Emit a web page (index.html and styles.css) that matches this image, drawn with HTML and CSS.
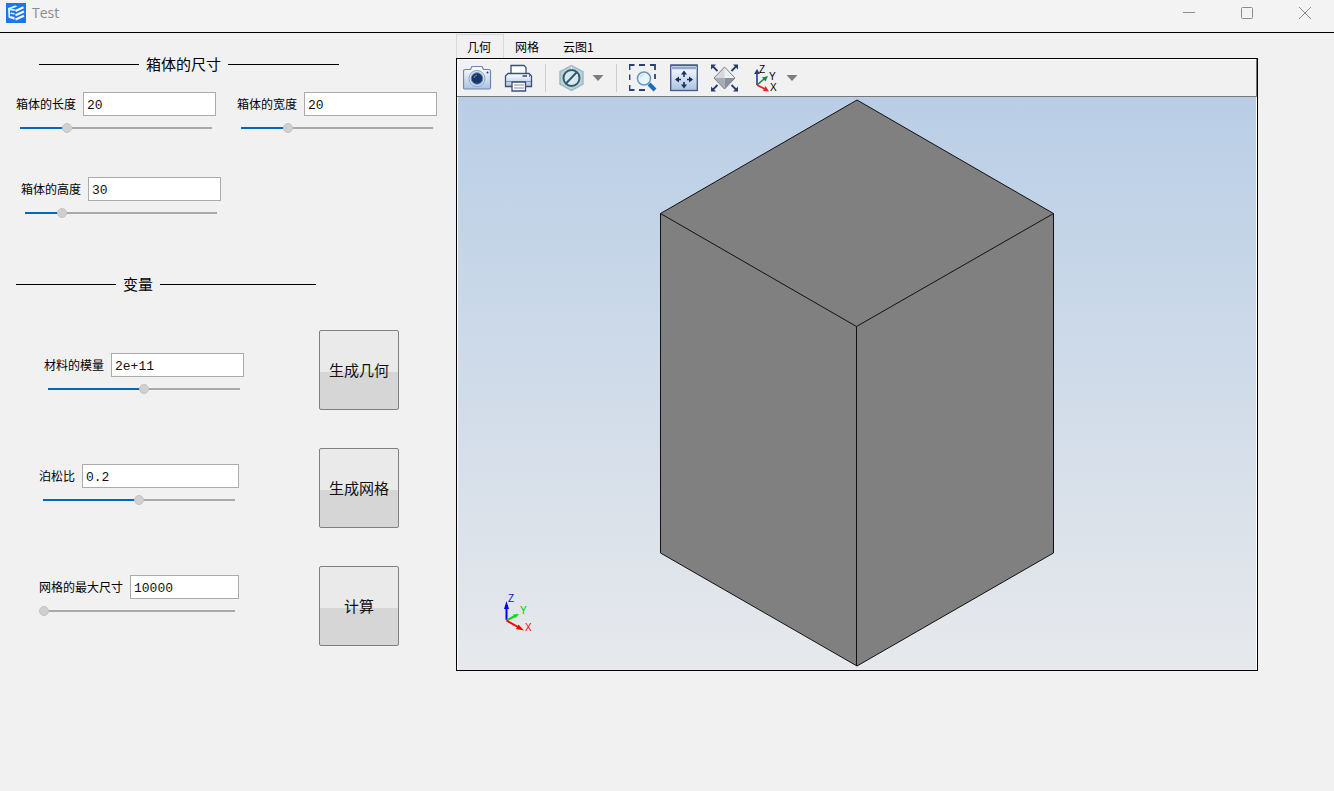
FILE: index.html
```
<!DOCTYPE html>
<html lang="zh-CN">

<head>
    <meta charset="UTF-8">
    <meta name="viewport" content="width=device-width, initial-scale=1.0">
    <title>Test</title>
    <link rel="stylesheet" href="styles.css">
</head>

<body>
    <header class="titlebar">
        <svg class="app-icon" viewBox="0 0 20 20" aria-hidden="true">
            <rect width="20" height="20" fill="#1877ea"/>
            <path d="M2 5 9 2.500 11.500 3.500 5.500 5.800 9.500 6.500 8.500 8 4 7.300V13L8.500 14V16.800L2.500 14.800Z" fill="#e4effd"/>
            <path d="M4.500 10.200 8.500 10.800" stroke="#e4effd" stroke-width="1.500"/>
            <path d="M9.500 8 17.500 4.300M9.500 12.200 18 8.500M9.500 16.400 18 12.700" stroke="#f4f8ff" stroke-width="2.200"/>
        </svg>
        <span class="title">Test</span>
        <div class="window-buttons">
            <button type="button" aria-label="最小化">
                <svg width="12" height="12" viewBox="0 0 12 12"><path d="M0 5.500H12"/></svg>
            </button>
            <button type="button" aria-label="最大化">
                <svg width="12" height="12" viewBox="0 0 12 12"><rect x="0.500" y="0.500" width="11" height="11" rx="1"/></svg>
            </button>
            <button type="button" aria-label="关闭">
                <svg width="12" height="12" viewBox="0 0 12 12"><path d="M0 0 12 12M12 0 0 12"/></svg>
            </button>
        </div>
    </header>

    <main class="workspace">
        <form class="params">
            <h2 class="section-title section-size">箱体的尺寸</h2>
            <div class="size-fields">
                <div class="field">
                    <label for="length">箱体的长度</label>
                    <input type="text" id="length" value="20">
                    <input type="range" aria-label="箱体的长度" value="24" style="--fill: 24%">
                </div>
                <div class="field">
                    <label for="width">箱体的宽度</label>
                    <input type="text" id="width" value="20">
                    <input type="range" aria-label="箱体的宽度" value="24" style="--fill: 24%">
                </div>
                <div class="field indent">
                    <label for="height">箱体的高度</label>
                    <input type="text" id="height" value="30">
                    <input type="range" aria-label="箱体的高度" value="19" style="--fill: 19%">
                </div>
            </div>

            <h2 class="section-title">变量</h2>
            <div class="variables">
                <div class="variable-fields">
                    <div class="field indent">
                        <label for="modulus">材料的模量</label>
                        <input type="text" id="modulus" value="2e+11">
                        <input type="range" aria-label="材料的模量" value="50" style="--fill: 50%">
                    </div>
                    <div class="field">
                        <label for="poisson">泊松比</label>
                        <input type="text" id="poisson" value="0.2">
                        <input type="range" aria-label="泊松比" value="50" style="--fill: 50%">
                    </div>
                    <div class="field">
                        <label for="mesh">网格的最大尺寸</label>
                        <input type="text" id="mesh" value="10000">
                        <input type="range" aria-label="网格的最大尺寸" value="0" style="--fill: 0%">
                    </div>
                </div>
                <div class="actions">
                    <button type="button">生成几何</button>
                    <button type="button">生成网格</button>
                    <button type="button">计算</button>
                </div>
            </div>
        </form>

        <section class="viewer">
            <div class="tabs" role="tablist">
                <button type="button" class="tab active" role="tab" aria-selected="true">几何</button>
                <button type="button" class="tab" role="tab" aria-selected="false">网格</button>
                <button type="button" class="tab" role="tab" aria-selected="false">云图1</button>
            </div>
            <div class="panel">
                <div class="toolbar">
                    <button type="button" aria-label="截图">
                        <svg viewBox="0 0 29 28">
                            <defs>
                                <linearGradient id="body" x2="0" y2="1"><stop stop-color="#fff"/><stop offset="1" stop-color="#abc3e2"/></linearGradient>
                            </defs>
                            <path d="M2.500 5.500H7.500L9 2.500H19L20.500 5.500H26Q27.500 5.500 27.500 7V23.500Q27.500 25 26 25H2Q.5 25 .5 23.500V7.500Q.5 5.500 2.500 5.500Z" fill="url(#body)" stroke="#6c86b0" stroke-width="1.200"/>
                            <circle cx="14" cy="14.500" r="8" fill="#d9e4f2" stroke="#8ba2c4"/>
                            <circle cx="14" cy="14.500" r="5.800" fill="#17376b" stroke="#6b86ad"/>
                            <path d="M11 14Q11.500 11.500 14 11" fill="none" stroke="#6f8bb5" stroke-width="1.200"/>
                            <circle cx="24.500" cy="8.500" r="1" fill="#223c70"/>
                        </svg>
                    </button>
                    <button type="button" aria-label="打印">
                        <svg viewBox="0 0 29 28">
                            <path d="M7 10V1.500H20L22 3.500V10" fill="#fff" stroke="#3b4f7c" stroke-width="1.300"/>
                            <path d="M4 9.500H25L27.500 12V22.500H1.500V12Z" fill="url(#body)" stroke="#3b4f7c" stroke-width="1.300"/>
                            <path d="M2 17.500H27" stroke="#8291ae"/>
                            <path d="M18.500 12H23M25 12H26" stroke="#34466f" stroke-width="1.500"/>
                            <path d="M8 18H21.500V27H8Z" fill="#fff" stroke="#3b4f7c" stroke-width="1.300"/>
                            <path d="M10 21H20M10 24H20" stroke="#7e8da8" stroke-width="1.200"/>
                        </svg>
                    </button>
                    <span class="separator"></span>
                    <div class="tool-group">
                        <button type="button" aria-label="选择过滤">
                            <svg viewBox="0 0 29 28">
                                <path d="M13.500 1.500 25 7.700V20L13.500 26.500 2 20V7.700Z" fill="#bcd0d6" stroke="#a0b5bd" stroke-width="1.400"/>
                                <path d="M13.500 2.500V6" stroke="#eef5f6"/>
                                <circle cx="13.500" cy="14" r="8" fill="#dce6e8" stroke="#285f75" stroke-width="2"/>
                                <path d="M8 19.500 18.500 8.500" stroke="#285f75" stroke-width="2"/>
                                <path d="M10.500 20 19.500 10.200" stroke="#f4f8f8"/>
                            </svg>
                        </button>
                        <button type="button" class="dropdown" aria-label="更多过滤选项">
                            <svg viewBox="0 0 12 28"><path d="M0.500 11H11.500L6 17Z" fill="#7d7d7d"/></svg>
                        </button>
                    </div>
                    <span class="separator"></span>
                    <button type="button" aria-label="框选缩放">
                        <svg viewBox="0 0 29 28">
                            <path d="M.5 6V1H5.500M10 1H16M21 1H26V6M.5 10.500V16M.5 21V26H5.500M10 26H16M26 10V15" fill="none" stroke="#294275" stroke-width="1.800"/>
                            <path d="M20 20 26 26" stroke="#1d6db0" stroke-width="4"/>
                            <circle cx="15" cy="14.500" r="6.500" fill="#eaf4fa" stroke="#6697bd" stroke-width="1.500"/>
                            <path d="M11 13.500Q12 10.500 15 10.500" fill="none" stroke="#b8d5e7"/>
                        </svg>
                    </button>
                    <button type="button" aria-label="适合窗口">
                        <svg viewBox="0 0 29 28">
                            <rect x=".7" y="1" width="26.600" height="25.500" fill="url(#body)" stroke="#4a5f8b" stroke-width="1.400"/>
                            <path d="M1 1.500H27" stroke="#4a5f8b" stroke-width="1.500"/>
                            <path d="M2 4H26" stroke="#8faad0" stroke-width="2.500"/>
                            <path d="M14 8V13M14 18V23M6 15.500H11M17 15.500H22" stroke="#1b315f" stroke-width="1.600"/>
                            <path d="M11 10.500 14 6.500 17 10.500ZM11 20.500 14 24.500 17 20.500ZM9 12.500 5 15.500 9 18.500ZM19 12.500 23 15.500 19 18.500Z" fill="#1b315f"/>
                        </svg>
                    </button>
                    <button type="button" aria-label="全部显示">
                        <svg viewBox="0 0 29 28">
                            <path d="M13.500 3 24 14H3Z" fill="#eef0f2"/>
                            <path d="M13.500 3V14H3Z" fill="#d5d9df"/>
                            <path d="M3 14H13.500V25Z" fill="#a5adb8"/>
                            <path d="M13.500 14H24L13.500 25Z" fill="#88919e"/>
                            <path d="M13.500 3 24 14 13.500 25 3 14Z" fill="none" stroke="#76808f"/>
                            <path d="M1.500 2 6.500 7M25.500 2 20.500 7M1.500 26 6.500 21M25.500 26 20.500 21" stroke="#263d70" stroke-width="1.800"/>
                            <path d="M0 .5H5L0 5.500ZM27 .5V5.500L22 .5ZM0 27.500V22.500L5 27.500ZM27 27.500H22L27 22.500Z" fill="#263d70"/>
                        </svg>
                    </button>
                    <div class="tool-group">
                        <button type="button" aria-label="视图方向">
                            <svg viewBox="0 0 29 28">
                                <path d="M5 21V8" stroke="#243f91" stroke-width="1.600"/>
                                <path d="M2 10 5 5 8 10Z" fill="#243f91"/>
                                <path d="M5 21 12 15" stroke="#178746" stroke-width="1.600"/>
                                <path d="M16 12 13.500 17.500 10 13.500Z" fill="#178746"/>
                                <path d="M5 21 13 25" stroke="#ed2028" stroke-width="1.600"/>
                                <path d="M17 27.500 11 27 13.500 22Z" fill="#ed2028"/>
                                <text x="7" y="9">Z</text>
                                <text x="17" y="16">Y</text>
                                <text x="18" y="27">X</text>
                            </svg>
                        </button>
                        <button type="button" class="dropdown" aria-label="更多视图方向">
                            <svg viewBox="0 0 12 28"><path d="M0.500 11H11.500L6 17Z" fill="#7d7d7d"/></svg>
                        </button>
                    </div>
                </div>
                <svg class="scene" viewBox="0 0 798 573" role="img" aria-label="箱体">
                    <defs>
                        <linearGradient id="sky" x2="0" y2="1"><stop stop-color="#b9cee6"/><stop offset="1" stop-color="#e7e9ec"/></linearGradient>
                    </defs>
                    <rect width="798" height="573" fill="url(#sky)"/>
                    <g class="box">
                        <path d="M399 3 595.500 116.500V456L399 569 202.500 456V116.500Z"/>
                        <path d="M202.500 116.500 398.500 229.500 595.500 116.500M398.500 229.500V569"/>
                    </g>
                    <g class="triad">
                        <path d="M48.500 523V508" stroke="#0000f5"/>
                        <path d="M46 512 48.500 504 51 512Z" fill="#0000f5"/>
                        <path d="M48.500 523.500 57 519" stroke="#00df00"/>
                        <path d="M61 517 57.500 521 55 517.500Z" fill="#00df00"/>
                        <path d="M48.500 523.500 60 530" stroke="#f00"/>
                        <path d="M66 533.500 58 532 60.500 527.500Z" fill="#f00"/>
                        <text x="50" y="505" fill="#1212c8">Z</text>
                        <text x="62" y="517" fill="#00c800">Y</text>
                        <text x="67" y="534" fill="#f00">X</text>
                    </g>
                </svg>
            </div>
        </section>
    </main>
</body>

</html>
```
FILE: styles.css
```
* {
    box-sizing: border-box;
}

body {
    margin: 0;
    background: #f1f1f1;
    color: #000;
    font-family: "Noto Sans CJK SC", sans-serif;
    font-size: 12px;
}

button {
    margin: 0;
    padding: 0;
    border: 0;
    background: none;
    color: inherit;
    font-family: inherit;
}

/* title bar */
.titlebar {
    display: flex;
    align-items: center;
    height: 33px;
    padding: 0 0 6px 6px;
    border-bottom: 1px solid #000;
    background: #f3f3f3;
}

.app-icon {
    width: 20px;
    height: 20px;
}

.title {
    margin-left: 6px;
    color: #8c8c8c;
    font-family: "Open Sans", sans-serif;
    font-size: 14px;
    line-height: 20px;
}

.window-buttons {
    display: flex;
    margin-left: auto;
}

.window-buttons button {
    display: flex;
    align-items: center;
    justify-content: center;
    width: 58px;
    height: 26px;
}

.window-buttons svg {
    fill: none;
    stroke: #8c8c8c;
}

.workspace {
    display: flex;
    align-items: flex-start;
    padding-right: 76px;
}

/* parameters */
.params {
    flex: none;
    width: 456px;
    padding: 21px 16px 0;
}

.section-title {
    display: flex;
    align-items: center;
    gap: 7px;
    width: 300px;
    margin: 0;
    font-size: 15px;
    font-weight: normal;
    line-height: 20px;
}

.section-title::before,
.section-title::after {
    content: "";
    width: 100px;
    height: 1px;
    background: #000;
}

.section-title::after {
    flex: 1;
}

.section-size {
    margin-left: 23px;
}

.size-fields {
    display: flex;
    flex-wrap: wrap;
    gap: 43px 21px;
    margin: 18px 0 55px;
}

.field {
    display: flex;
    flex-wrap: wrap;
    align-items: center;
    gap: 6px 7px;
    width: 200px;
}

.indent {
    margin-left: 5px;
}

.field label {
    line-height: 24px;
}

.field input[type="text"] {
    flex: 1;
    min-width: 0;
    height: 24px;
    padding: 2px 3px 0;
    border: 1px solid #ababab;
    background: #fff;
    color: #111;
    font-family: "Liberation Mono", monospace;
    font-size: 13px;
}

.field input[type="range"] {
    appearance: none;
    width: 100%;
    height: 12px;
    margin: 0;
    background: linear-gradient(to right, #0067c0 var(--fill), #a9a9a9 var(--fill)) center / calc(100% - 8px) 2px no-repeat;
}

.field input[type="range"]::-webkit-slider-thumb {
    appearance: none;
    width: 10px;
    height: 10px;
    border: 1px solid #c4c4c4;
    border-radius: 50%;
    background: #d0d0d0;
}

.variables {
    display: flex;
    justify-content: space-between;
    width: 383px;
    margin-top: 36px;
}

.variable-fields {
    display: flex;
    flex-direction: column;
    gap: 69px;
    padding: 23px 0 0 23px;
}

.actions {
    display: flex;
    flex-direction: column;
    gap: 38px;
}

.actions button {
    width: 80px;
    height: 80px;
    padding-bottom: 2px;
    border: 1px solid #808080;
    border-radius: 2px;
    background: linear-gradient(#eaeaea 52%, #d6d6d6 52%);
    color: #111;
    font-size: 15px;
}

/* viewer */
.viewer {
    flex: 1;
    min-width: 0;
    padding-top: 1px;
}

.tabs {
    display: flex;
}

.tab {
    height: 24px;
    padding: 0 12px 0 10px;
    border: 1px solid transparent;
    border-bottom: 0;
    font-size: 12px;
}

.tab.active {
    border-color: #d9d9d9;
}

.panel {
    border: 1px solid #000;
    background: #fff;
}

.toolbar {
    display: flex;
    align-items: center;
    gap: 12px;
    height: 38px;
    padding: 0 6px;
    border: solid #787878;
    border-width: 0 1px 1px 0;
    background: #f1f1f1;
    box-shadow: inset 1px 1px #fff;
}

.toolbar button {
    width: 29px;
    height: 28px;
}

.toolbar button.dropdown {
    width: 12px;
}

.toolbar svg {
    display: block;
    width: 100%;
    height: 100%;
}

.toolbar text {
    font-family: "Liberation Sans", sans-serif;
    font-size: 10px;
}

.tool-group {
    display: flex;
    gap: 5px;
}

.separator {
    width: 1px;
    height: 28px;
    background: #cdcdcd;
}

.scene {
    display: block;
    width: 100%;
    padding: 0 1px;
}

.box path {
    fill: #808080;
    stroke: #111;
}

.box path + path {
    fill: none;
}

.triad path {
    stroke-width: 2;
}

.triad text {
    font-family: "Liberation Sans", sans-serif;
    font-size: 10px;
}
```
